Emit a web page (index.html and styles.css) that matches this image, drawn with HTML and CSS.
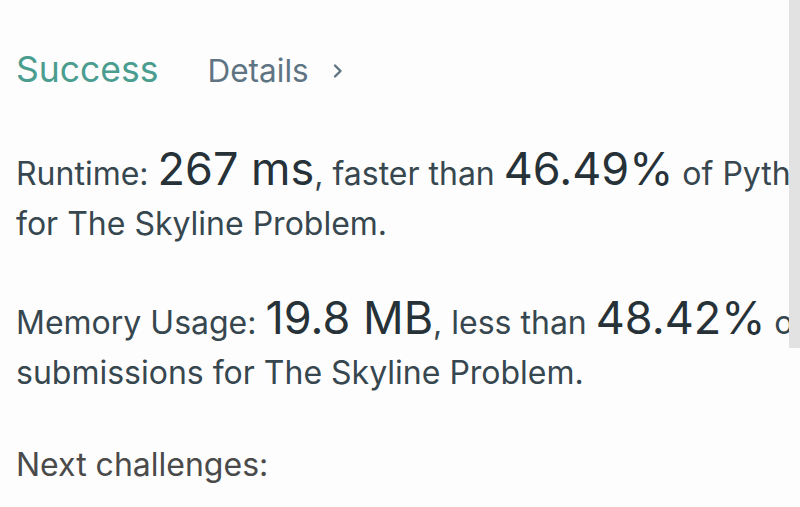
FILE: index.html
```html
<!DOCTYPE html>
<html>
<head>
<meta charset="utf-8">
<link rel="stylesheet" href="styles.css">
</head>
<body>
<div class="page">
  <div class="header">
    <span class="status">Success</span>
    <a class="details">Details<svg class="chev" width="12" height="16" viewBox="0 0 12 16"><path d="M3 2.5 L8.5 8 L3 13.5" fill="none" stroke="#5f7482" stroke-width="2.4" stroke-linecap="round" stroke-linejoin="round"/></svg></a>
  </div>
  <p class="stat">Runtime: <span class="big">267 ms</span>, faster than <span class="big">46.49%</span> of Python3 online submissions<br>for The Skyline Problem.</p>
  <p class="stat">Memory Usage: <span class="big">19.8 MB</span>, less than <span class="big">48.42%</span> of Python3 online<br>submissions for The Skyline Problem.</p>
  <p class="next">Next challenges:</p>
</div>
<div class="scrollbar"></div>
</body>
</html>
```
FILE: styles.css
```css
html, body {
  margin: 0;
  padding: 0;
  background: #fdfdfd;
  overflow: hidden;
  width: 800px;
  height: 507px;
}
body {
  position: relative;
  font-family: Inter, "Liberation Sans", sans-serif;
}
.page {
  padding: 48px 0 0 16px;
  white-space: nowrap;
}
.header {
  display: flex;
  align-items: baseline;
  height: 50px;
}
.status {
  color: #4a9d8f;
  font-size: 35.5px;
}
.details {
  margin-left: 49px;
  color: #5f7482;
  font-size: 31.5px;
  display: flex;
  align-items: center;
}
.chev {
  margin-left: 23px;
}
.stat {
  margin: 0;
  color: #37474f;
  font-size: 32px;
  line-height: 50px;
  margin-top: 46px;
}
.stat + .stat { margin-top: 44px; }
.big {
  font-size: 45px;
  color: #263238;
}
.next {
  margin: 42px 0 0;
  color: #4a4a4a;
  font-size: 32px;
  line-height: 50px;
}
.scrollbar {
  position: absolute;
  top: 0;
  right: 0;
  width: 11px;
  height: 348px;
  background: #e2e2e2;
}
```
